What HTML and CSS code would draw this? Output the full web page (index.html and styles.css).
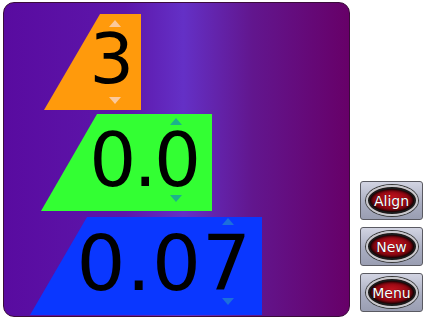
FILE: index.html
```html
<!DOCTYPE html>
<html>
<head>
    <meta charset="utf-8" />
    <title>Spinners</title>
    <link rel="stylesheet" href="styles.css">
</head>
<body>
    <div class="board">
        <div class="spin orange">
            <span class="arrow up"></span>
            <span class="value">3</span>
            <span class="arrow down"></span>
        </div>
        <div class="spin green">
            <span class="arrow up"></span>
            <span class="value">0.0</span>
            <span class="arrow down"></span>
        </div>
        <div class="spin blue">
            <span class="arrow up"></span>
            <span class="value">0.07</span>
            <span class="arrow down"></span>
        </div>
    </div>

    <div class="buttons">
        <div class="btn"><div class="oval">Align</div></div>
        <div class="btn"><div class="oval">New</div></div>
        <div class="btn"><div class="oval">Menu</div></div>
    </div>
</body>
</html>
```

FILE: styles.css
```css
body {
    margin: 0;
    display: flex;
    align-items: flex-start;
    background: #fff;
    font-family: "DejaVu Sans", sans-serif;
}

div.board {
    margin: 2px 0 0 3px;
    width: 345px;
    height: 313px;
    border: 1px solid #3a0c3a;
    border-radius: 11px;
    overflow: hidden;
    background: linear-gradient(to right, #590ba0 0%, #5d16aa 35%, #6430c6 52%, #62168e 72%, #670068 100%);
    display: flex;
    flex-direction: column;
    align-items: flex-start;
}

div.spin {
    position: relative;
    display: flex;
    justify-content: flex-end;
    align-items: center;
    color: #000;
    line-height: 1;
}

div.spin.orange {
    margin: 11px 0 0 40px;
    width: 97px;
    height: 96px;
    padding-right: 7px;
    box-sizing: border-box;
    background: #ff9a0c;
    clip-path: polygon(56px 0, 100% 0, 100% 100%, 0 100%);
    font-size: 70px;
}

div.spin.green {
    margin: 4px 0 0 37px;
    width: 171px;
    height: 97px;
    padding-right: 14px;
    box-sizing: border-box;
    background: #33ff33;
    clip-path: polygon(56px 0, 100% 0, 100% 100%, 0 100%);
    font-size: 74px;
    letter-spacing: -3px;
}

div.spin.blue {
    margin: 6px 0 0 26px;
    width: 232px;
    height: 98px;
    padding-right: 10px;
    box-sizing: border-box;
    background: #0a37ff;
    clip-path: polygon(57px 0, 100% 0, 100% 100%, 0 100%);
    font-size: 77px;
    letter-spacing: 1px;
}

span.value {
    margin-top: -6px;
}

span.arrow {
    position: absolute;
    width: 0;
    height: 0;
    border-left: 6px solid transparent;
    border-right: 6px solid transparent;
}

span.arrow.up {
    border-bottom: 7px solid;
}

span.arrow.down {
    border-top: 7px solid;
}

div.orange span.arrow { left: 65px; color: #fbc99c; }
div.orange span.arrow.up { top: 6px; }
div.orange span.arrow.down { top: 83px; }

div.green span.arrow { left: 129px; color: #1cb38c; }
div.green span.arrow.up { top: 4px; }
div.green span.arrow.down { top: 81px; }

div.blue span.arrow { left: 192px; color: #1c6fdc; }
div.blue span.arrow.up { top: 1px; }
div.blue span.arrow.down { top: 81px; }

div.buttons {
    margin: 181px 0 0 10px;
    display: flex;
    flex-direction: column;
    gap: 7px;
}

div.btn {
    width: 63px;
    height: 39px;
    box-sizing: border-box;
    border: 1px solid #5a5a62;
    border-radius: 3px;
    background: linear-gradient(#d2d4e2, #a8acc0 60%, #9a9eb2);
    display: flex;
    justify-content: center;
    align-items: center;
}

div.oval {
    width: 52px;
    height: 31px;
    box-sizing: border-box;
    border-radius: 50%;
    border: 2px solid #c8c8cc;
    box-shadow: 0 0 0 1px #3a3a3a, inset 0 0 0 2px #1a1a1a, inset 0 0 3px 3px #000;
    background: radial-gradient(ellipse at 50% 45%, #c8141f 0%, #920812 45%, #3a0004 85%);
    color: #fff;
    font-size: 14px;
    display: flex;
    justify-content: center;
    align-items: center;
    text-shadow: 0 0 1px #000;
}
```
